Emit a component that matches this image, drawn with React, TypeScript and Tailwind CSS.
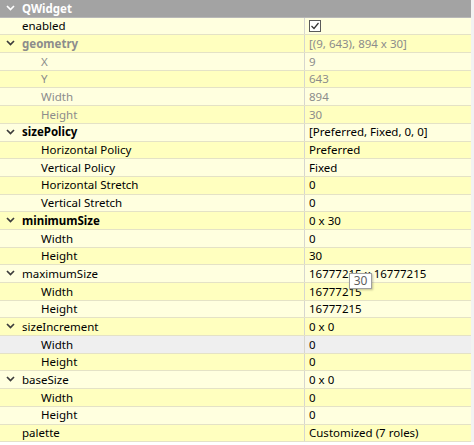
import React from 'react';

type Row = {
    label: string;
    value?: string;
    depth: 0 | 1;
    bold?: boolean;
    disabled?: boolean;
    expander?: boolean;
    checkbox?: boolean;
    selected?: boolean;
};

const rows: Row[] = [
    { label: 'enabled', depth: 0, checkbox: true },
    { label: 'geometry', value: '[(9, 643), 894 x 30]', depth: 0, bold: true, disabled: true, expander: true },
    { label: 'X', value: '9', depth: 1, disabled: true },
    { label: 'Y', value: '643', depth: 1, disabled: true },
    { label: 'Width', value: '894', depth: 1, disabled: true },
    { label: 'Height', value: '30', depth: 1, disabled: true },
    { label: 'sizePolicy', value: '[Preferred, Fixed, 0, 0]', depth: 0, bold: true, expander: true },
    { label: 'Horizontal Policy', value: 'Preferred', depth: 1 },
    { label: 'Vertical Policy', value: 'Fixed', depth: 1 },
    { label: 'Horizontal Stretch', value: '0', depth: 1 },
    { label: 'Vertical Stretch', value: '0', depth: 1 },
    { label: 'minimumSize', value: '0 x 30', depth: 0, bold: true, expander: true },
    { label: 'Width', value: '0', depth: 1 },
    { label: 'Height', value: '30', depth: 1 },
    { label: 'maximumSize', value: '16777215 x 16777215', depth: 0, expander: true },
    { label: 'Width', value: '16777215', depth: 1 },
    { label: 'Height', value: '16777215', depth: 1 },
    { label: 'sizeIncrement', value: '0 x 0', depth: 0, expander: true },
    { label: 'Width', value: '0', depth: 1, selected: true },
    { label: 'Height', value: '0', depth: 1 },
    { label: 'baseSize', value: '0 x 0', depth: 0, expander: true },
    { label: 'Width', value: '0', depth: 1 },
    { label: 'Height', value: '0', depth: 1 },
    { label: 'palette', value: 'Customized (7 roles)', depth: 0 },
];

const Chevron = ({ color }: { color: string }) => (
    <svg width="9" height="6" viewBox="0 0 9 6" className="shrink-0">
        <path d="M1 1 L4.5 4.5 L8 1" fill="none" stroke={color} strokeWidth="1.7" />
    </svg>
);

const CheckBox = () => (
    <svg width="12" height="12" viewBox="0 0 12 12">
        <rect x="0.5" y="0.5" width="11" height="11" fill="#ffffff" stroke="#5a5a5a" />
        <path d="M2.5 6 L5 8.5 L9.5 3" fill="none" stroke="#333333" strokeWidth="1.2" />
    </svg>
);

const PropertyRow = ({ row, index }: { row: Row; index: number }) => {
    const bg = row.selected ? 'bg-[#efefef]' : index % 2 === 1 ? 'bg-[#ffffbf]' : 'bg-[#ffffdf]';
    const text = row.disabled ? 'text-[#8c8c8c]' : 'text-[#000000]';
    return (
        <div className={`flex h-[17.7px] border-b border-[#e4e2c6] ${bg}`}>
            <div className={`flex items-center w-[305px] shrink-0 border-r border-[#d6d6d0] ${row.depth === 1 ? 'pl-[41px]' : 'pl-[22px]'} relative`}>
                {row.expander && (
                    <span className="absolute left-[6px] top-[5px]">
                        <Chevron color="#3c3c3c" />
                    </span>
                )}
                <span className={`${text} ${row.bold ? 'font-bold' : ''}`}>{row.label}</span>
            </div>
            <div className={`flex items-center pl-[4px] flex-1 ${text}`}>
                {row.checkbox ? <CheckBox /> : row.value}
            </div>
        </div>
    );
};

export default function App() {
    return (
        <div className="relative w-[474px] h-[445px] overflow-hidden bg-white text-[11.5px] leading-none" style={{ fontFamily: '"Noto Sans", "Open Sans", sans-serif' }}>
            <div className="flex">
                <div className="w-[471px]">
                    <div className="flex items-center h-[17.7px] bg-[#a3a3a3] border-b border-[#b8b8b8] pl-[22px] relative">
                        <span className="absolute left-[6px] top-[5px]">
                            <Chevron color="#ffffff" />
                        </span>
                        <span className="text-white font-bold">QWidget</span>
                    </div>
                    {rows.map((row, i) => (
                        <PropertyRow key={i} row={row} index={i} />
                    ))}
                </div>
                <div className="w-[3px] bg-[#f2f2f2]" />
            </div>

            {/* hover tooltip over maximumSize value */}
            <div className="absolute left-[349px] top-[273px] w-[23px] h-[16px] bg-white border border-[#a0a0a0] shadow-[1px_1px_2px_rgba(0,0,0,0.25)] flex items-center justify-center text-[#5f5f5f] text-[12px]">
                30
            </div>
        </div>
    );
}
